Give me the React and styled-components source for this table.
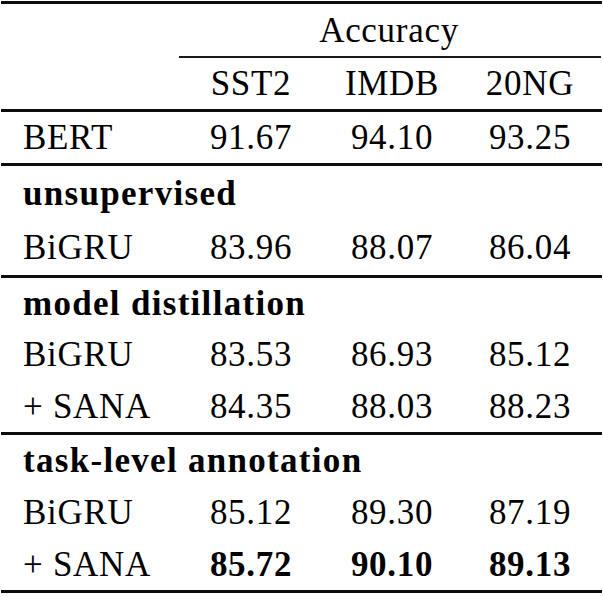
import React from "react";
import styled, { createGlobalStyle } from "styled-components";

const GlobalStyle = createGlobalStyle`
  html, body {
    margin: 0;
    padding: 0;
    background: #ffffff;
  }
`;

const COLUMNS = ["SST2", "IMDB", "20NG"];

const groups = [
  {
    title: null,
    height: 51,
    rows: [{ label: "BERT", values: ["91.67", "94.10", "93.25"] }],
  },
  {
    title: "unsupervised",
    height: 54.5,
    rows: [{ label: "BiGRU", values: ["83.96", "88.07", "86.04"] }],
  },
  {
    title: "model distillation",
    height: 51.3,
    rows: [
      { label: "BiGRU", values: ["83.53", "86.93", "85.12"] },
      { label: "+ SANA", values: ["84.35", "88.03", "88.23"] },
    ],
  },
  {
    title: "task-level annotation",
    height: 51.7,
    rows: [
      { label: "BiGRU", values: ["85.12", "89.30", "87.19"] },
      { label: "+ SANA", values: ["85.72", "90.10", "89.13"], best: true },
    ],
  },
];

const App = () => {
  return (
    <>
      <GlobalStyle />
      <Table>
        <Rule />
        <Row $height={52}>
          <Cell />
          <SpanCell>Accuracy</SpanCell>
        </Row>
        <SubRule />
        <Row $height={51}>
          <Cell />
          {COLUMNS.map((c) => (
            <Cell key={c} $center>
              {c}
            </Cell>
          ))}
        </Row>
        <Rule />
        {groups.map((g, gi) => (
          <Group key={gi}>
            {g.title && (
              <Row $height={g.height}>
                <GroupTitle>{g.title}</GroupTitle>
              </Row>
            )}
            {g.rows.map((r, ri) => (
              <Row key={ri} $height={g.height}>
                <Cell>{r.label}</Cell>
                {r.values.map((v, vi) => (
                  <Cell key={vi} $center $bold={r.best}>
                    {v}
                  </Cell>
                ))}
              </Row>
            ))}
            <Rule />
          </Group>
        ))}
      </Table>
    </>
  );
};

export default App;

const Table = styled.div`
  width: 603px;
  padding-top: 1px;
  font-family: "Liberation Serif", "Times New Roman", serif;
  font-size: 35px;
  letter-spacing: 0.7px;
  color: #000000;
`;

const Rule = styled.div`
  height: 3px;
  margin: 0 1px;
  background: #0d0d0d;
`;

const SubRule = styled.div`
  height: 2px;
  margin-left: 179px;
  margin-right: 2px;
  background: #1a1a1a;
`;

const Group = styled.div`
  display: flex;
  flex-direction: column;
`;

const Row = styled.div`
  display: grid;
  grid-template-columns: 181px 140px 142px 134px;
  align-items: center;
  height: ${(p) => p.$height}px;
  line-height: 1;
`;

const Cell = styled.div`
  padding-left: ${(p) => (p.$center ? 0 : 23)}px;
  text-align: ${(p) => (p.$center ? "center" : "left")};
  font-weight: ${(p) => (p.$bold ? 700 : 400)};
  white-space: nowrap;
`;

const SpanCell = styled.div`
  grid-column: 2 / span 3;
  text-align: center;
`;

const GroupTitle = styled.div`
  grid-column: 1 / -1;
  padding-left: 23px;
  font-weight: 700;
  letter-spacing: 1.3px;
  white-space: nowrap;
`;
